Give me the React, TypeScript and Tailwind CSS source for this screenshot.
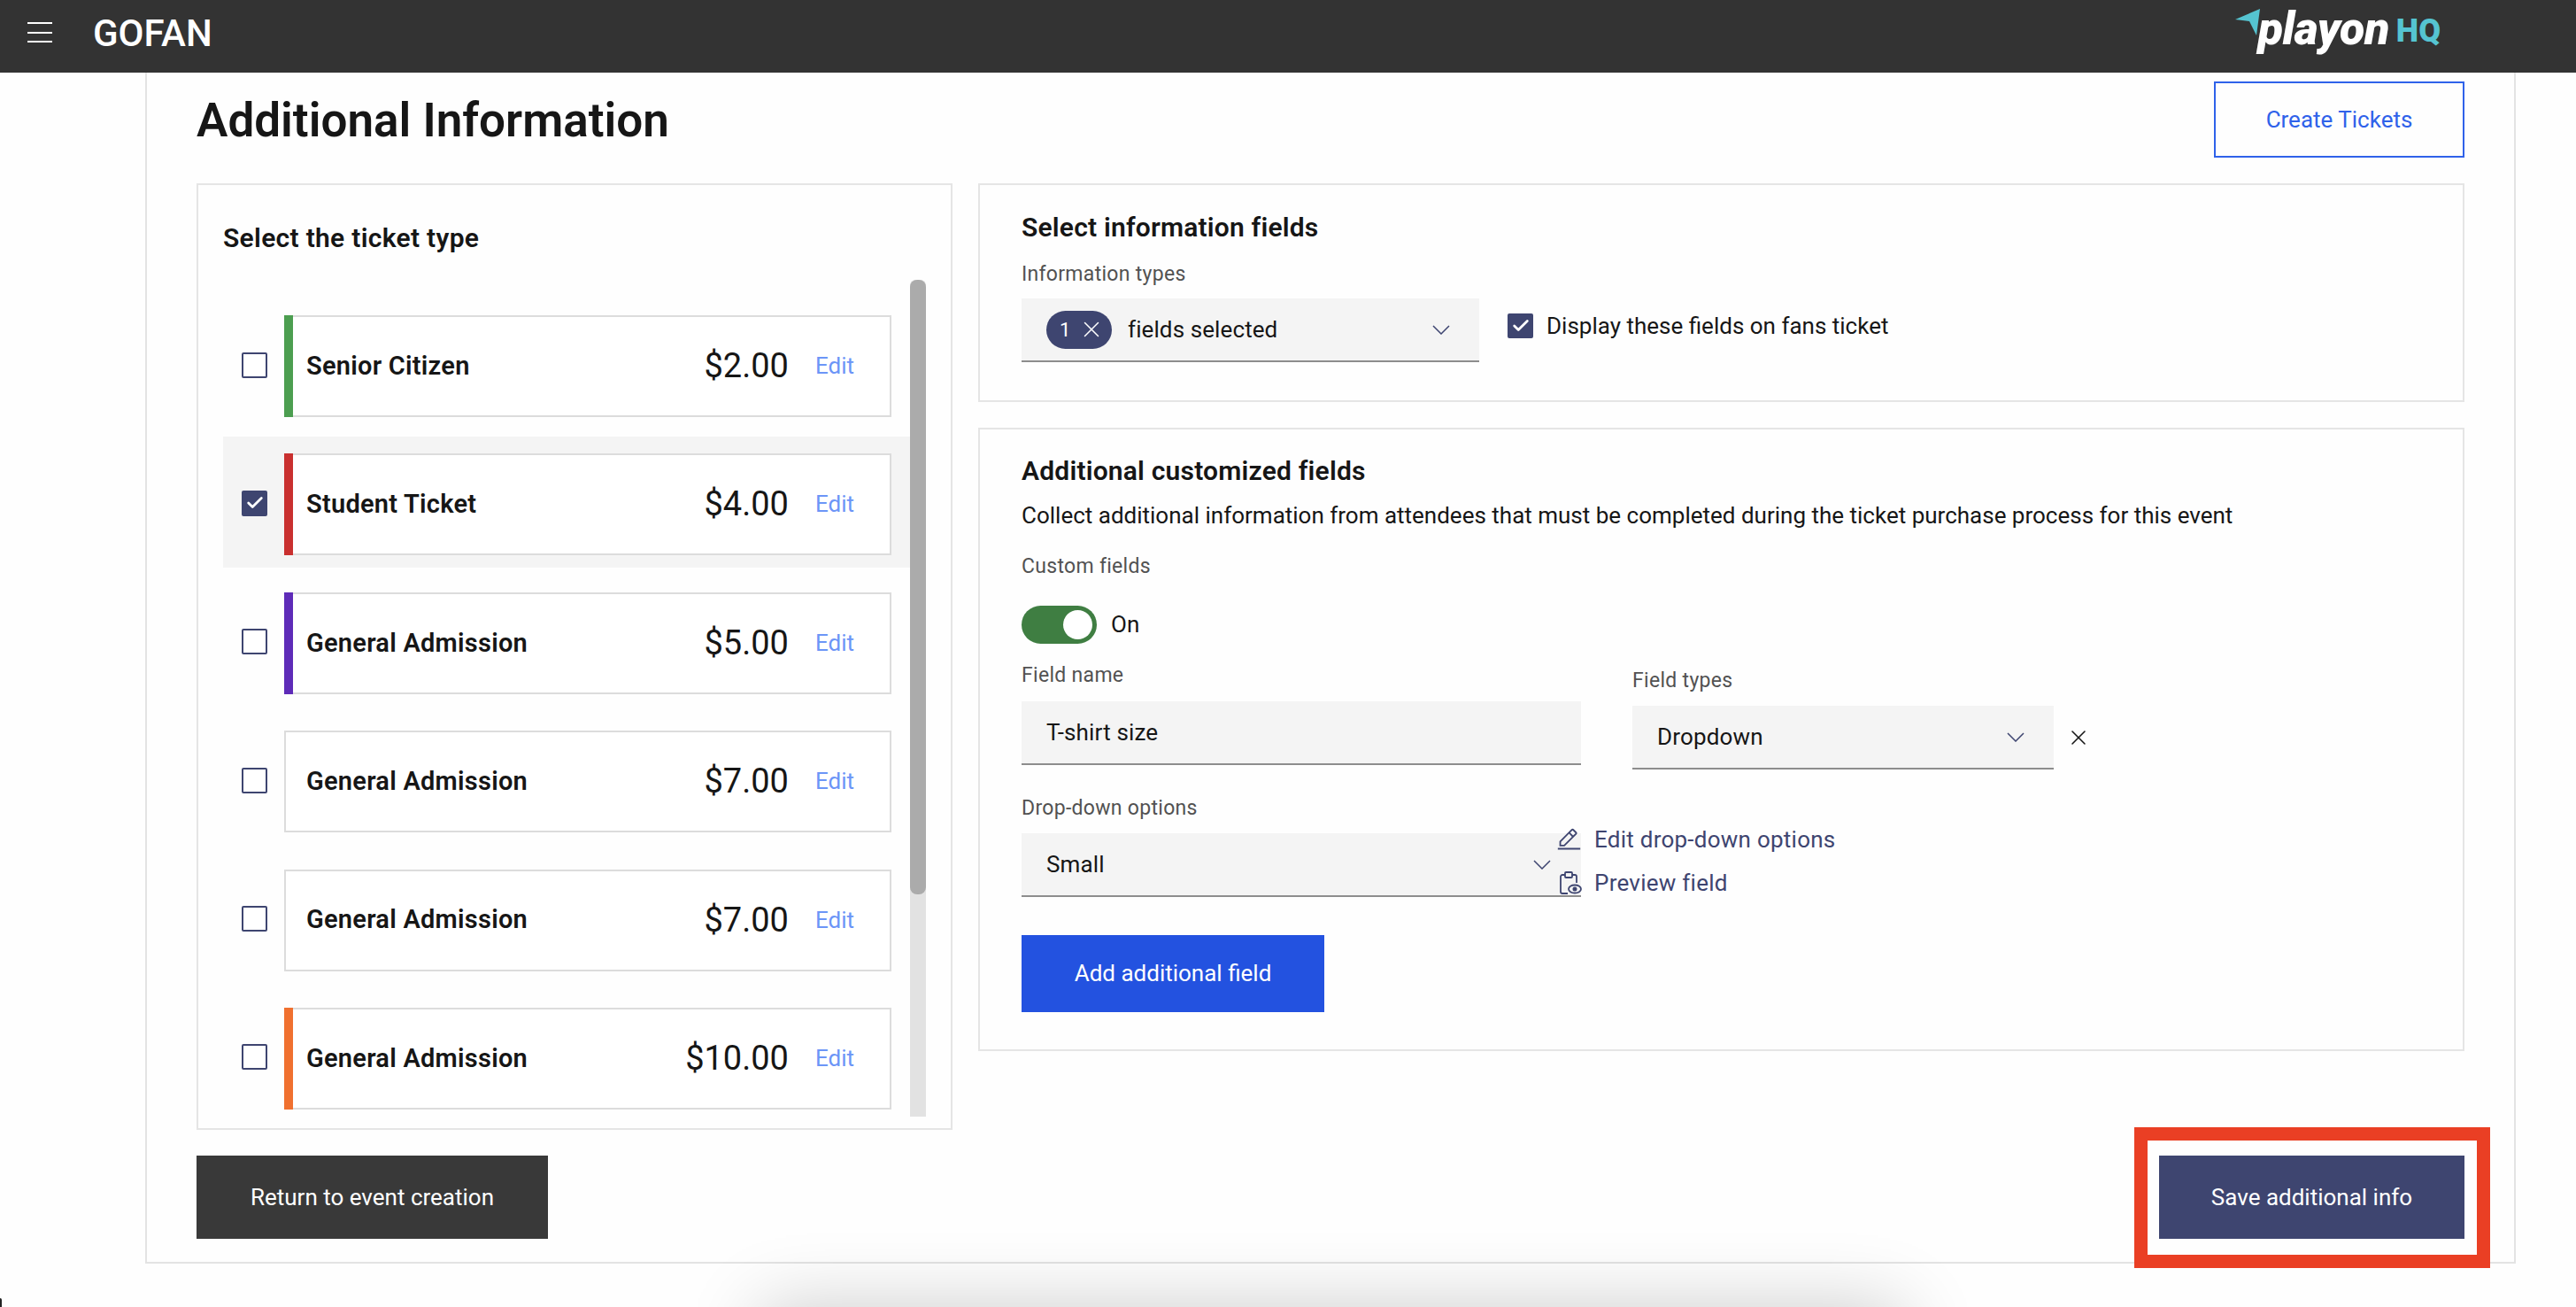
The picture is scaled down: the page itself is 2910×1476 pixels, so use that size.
import { Check, X } from 'lucide-react'

interface Ticket {
  id: number
  name: string
  price: string
  color?: string
  selected?: boolean
}

const tickets: Ticket[] = [
  { id: 1, name: 'Senior Citizen', price: '$2.00', color: 'bg-[#4c9e50]' },
  { id: 2, name: 'Student Ticket', price: '$4.00', color: 'bg-[#c9302f]', selected: true },
  { id: 3, name: 'General Admission', price: '$5.00', color: 'bg-[#5e2bb8]' },
  { id: 4, name: 'General Admission', price: '$7.00' },
  { id: 5, name: 'General Admission', price: '$7.00' },
  { id: 6, name: 'General Admission', price: '$10.00', color: 'bg-[#f0702f]' },
]

const Chevron = () => (
  <svg width="20" height="11" viewBox="0 0 20 11" fill="none" stroke="#3e4570" strokeWidth="1.5">
    <path d="M1 1l9 9 9-9" />
  </svg>
)

const App = () => {
  return (
    <div className="relative h-[1476px] overflow-hidden bg-[#fefefe] font-['Roboto',sans-serif] text-[#161616]">
      {/* Header */}
      <header className="flex h-[82px] items-start bg-[#333333] text-white">
        <div className="ml-[31px] mt-[25px] flex h-[23px] w-[28px] flex-col justify-between">
          <span className="h-[2px] bg-white"></span>
          <span className="h-[2px] bg-white"></span>
          <span className="h-[2px] bg-white"></span>
        </div>
        <span className="ml-[46px] mt-[14px] text-[42px] font-medium leading-[48px]">GOFAN</span>
        <div className="ml-auto mr-[153px] flex items-start">
          <svg className="mt-[10px]" width="28" height="30" viewBox="0 0 28 30" fill="#55c4d1">
            <path d="M0 12L28 0l-4 30-8-16z" />
          </svg>
          <span className="-ml-[2px] mt-[4px] text-[52px] font-black italic leading-[58px] tracking-[-0.5px]">playon</span>
          <span className="ml-[8px] mt-[15px] text-[36px] font-black leading-[40px] text-[#55c4d1]">HQ</span>
        </div>
      </header>

      {/* Main panel */}
      <main className="ml-[164px] mr-[68px] h-[1345px] border-x-2 border-b-2 border-[#e3e3e3] px-[56px] pt-[10px]">
        <div className="flex h-[86px] items-center justify-between">
          <h1 className="mt-[2px] text-[53px] font-semibold leading-[64px]">Additional Information</h1>
          <button className="h-[86px] w-[283px] border-2 border-[#2f62ea] text-[26px] text-[#2f62ea]">
            Create Tickets
          </button>
        </div>

        <div className="mt-[29px] flex gap-[29px]">
          {/* Ticket type card */}
          <section className="h-[1069px] w-[854px] border-2 border-[#e5e5e5] pl-[28px] pr-[28px]">
            <h2 className="mt-[42px] text-[30px] font-semibold leading-[36px] tracking-[0.3px]">Select the ticket type</h2>
            <div className="mt-[29px] flex h-[945px]">
              <div className="w-[776px] overflow-hidden pt-[21px]">
                {tickets.map((ticket) => (
                  <div
                    key={ticket.id}
                    className={`mb-[8.4px] flex h-[148px] items-center pb-[14px] pl-[21px] pr-[21px] pt-[19px] ${ticket.selected ? 'bg-[#f4f4f4]' : ''}`}
                  >
                    {ticket.selected ? (
                      <span className="mb-[3px] flex h-[29px] w-[29px] items-center justify-center rounded-[2px] bg-[#3e4570]">
                        <Check size={22} color="white" strokeWidth={3} />
                      </span>
                    ) : (
                      <span className="mb-[3px] h-[29px] w-[29px] rounded-[2px] border-2 border-[#3e4570] bg-white"></span>
                    )}
                    <div className="ml-[19px] flex h-[115px] flex-1 items-center border-2 border-[#dcdcdc] bg-white">
                      <span className={`-ml-[2px] h-[115px] w-[10px] ${ticket.color ?? ''}`}></span>
                      <span className="ml-[15px] flex-1 text-[29px] font-semibold tracking-[0.25px]">{ticket.name}</span>
                      <span className="text-[38px]">{ticket.price}</span>
                      <span className="ml-[30px] mr-[40px] text-[26px] text-[#6c95f7]">Edit</span>
                    </div>
                  </div>
                ))}
              </div>
              {/* Scrollbar */}
              <div className="h-[945px] w-[18px] rounded-t-[6px] bg-[#e2e2e2]">
                <div className="h-[694px] w-[18px] rounded-[8px] bg-[#ababab]"></div>
              </div>
            </div>
          </section>

          <div className="flex flex-1 flex-col gap-[29px]">
            {/* Select information fields */}
            <section className="h-[247px] border-2 border-[#e5e5e5] pl-[47px] pt-[30px]">
              <h2 className="text-[30px] font-semibold leading-[36px] tracking-[0.2px]">Select information fields</h2>
              <p className="mt-[20px] text-[23px] leading-[30px] tracking-[0.3px] text-[#525252]">Information types</p>
              <div className="mt-[12px] flex items-start">
                <div className="flex h-[72px] w-[517px] items-center border-b-2 border-[#8d8d8d] bg-[#f4f4f4] pl-[28px]">
                  <span className="flex h-[43px] w-[74px] items-center gap-[9px] rounded-full bg-[#3e4570] pl-[15px] text-[22px] text-white">
                    1 <X size={30} strokeWidth={1.2} />
                  </span>
                  <span className="ml-[18px] flex-1 text-[26px] tracking-[0.1px]">fields selected</span>
                  <span className="mr-[33px]">
                    <Chevron />
                  </span>
                </div>
                <span className="ml-[32px] mt-[17px] flex h-[28px] w-[29px] items-center justify-center rounded-[2px] bg-[#3e4570]">
                  <Check size={22} color="white" strokeWidth={3} />
                </span>
                <span className="ml-[15px] mt-[13px] text-[26px] leading-[36px]">Display these fields on fans ticket</span>
              </div>
            </section>

            {/* Additional customized fields */}
            <section className="h-[704px] border-2 border-[#e5e5e5] pl-[47px] pt-[29px]">
              <h2 className="text-[30px] font-semibold leading-[36px] tracking-[0.2px]">Additional customized fields</h2>
              <p className="mt-[14px] text-[26px] leading-[36px]">
                Collect additional information from attendees that must be completed during the ticket purchase process for this event
              </p>
              <p className="mt-[25px] text-[23px] leading-[30px] tracking-[0.3px] text-[#525252]">Custom fields</p>
              <div className="mt-[29px] flex items-center">
                <span className="flex h-[43px] w-[85px] items-center justify-end rounded-full bg-[#3f7e42] pr-[5px]">
                  <span className="h-[33px] w-[33px] rounded-full bg-white"></span>
                </span>
                <span className="ml-[16px] text-[26px]">On</span>
              </div>

              <div className="mt-[21px] flex items-start">
                <div className="w-[632px]">
                  <p className="text-[23px] leading-[30px] tracking-[0.3px] text-[#525252]">Field name</p>
                  <div className="mt-[14px] flex h-[72px] items-center border-b-2 border-[#8d8d8d] bg-[#f4f4f4] pl-[28px] text-[26px] tracking-[0.15px]">
                    T-shirt size
                  </div>
                </div>
                <div className="ml-[58px] mt-[6px] w-[476px]">
                  <p className="text-[23px] leading-[30px] tracking-[0.3px] text-[#525252]">Field types</p>
                  <div className="mt-[13px] flex h-[72px] items-center justify-between border-b-2 border-[#8d8d8d] bg-[#f4f4f4] pl-[28px] pr-[33px] text-[26px] tracking-[0.15px]">
                    Dropdown
                    <Chevron />
                  </div>
                </div>
                <X className="ml-[14px] mt-[71px]" size={28} strokeWidth={1.3} color="#161616" />
              </div>

              <p className="mt-[29px] text-[23px] leading-[30px] tracking-[0.3px] text-[#525252]">Drop-down options</p>
              <div className="mt-[13px] flex items-start">
                <div className="flex h-[72px] w-[632px] items-center justify-between border-b-2 border-[#8d8d8d] bg-[#f4f4f4] pl-[28px] pr-[34px] text-[26px] tracking-[0.15px]">
                  Small
                  <Chevron />
                </div>
                <div className="-ml-[28px] -mt-[8px] flex flex-col gap-[19px] text-[26px] leading-[30px] tracking-[0.25px] text-[#3e4570]">
                  <div className="flex items-center gap-[14px]">
                    <svg width="29" height="29" viewBox="0 0 32 32" fill="#3e4570">
                      <path d="M2 26h28v2H2zM25.4 9c.8-.8.8-2 0-2.8l-3.6-3.6c-.8-.8-2-.8-2.8 0l-15 15V24h6.4l15-15zm-5-5L24 7.6l-3 3L17.4 7l3-3zM6 22v-3.6l10-10l3.6 3.6l-10 10H6z" />
                    </svg>
                    Edit drop-down options
                  </div>
                  <div className="flex items-center gap-[14px]">
                    <svg width="29" height="26" viewBox="0 0 29 26" fill="none" stroke="#3e4570" strokeWidth="1.8">
                      <path d="M10 4H7a2 2 0 0 0-2 2v17a2 2 0 0 0 2 2h6" />
                      <path d="M18 4h3a2 2 0 0 1 2 2v7" />
                      <rect x="10" y="1" width="8" height="6" rx="1" />
                      <ellipse cx="21" cy="20" rx="7" ry="4.5" />
                      <circle cx="21" cy="20" r="1.6" fill="#3e4570" />
                    </svg>
                    Preview field
                  </div>
                </div>
              </div>

              <button className="mt-[43px] h-[87px] w-[342px] bg-[#2352e0] text-[26px] text-white">
                Add additional field
              </button>
            </section>
          </div>
        </div>

        <div className="mt-[29px] flex justify-between">
          <button className="h-[94px] w-[397px] bg-[#393939] text-[26px] text-white">Return to event creation</button>
          <button className="h-[94px] w-[345px] bg-[#3e4570] text-[26px] text-white">Save additional info</button>
        </div>
      </main>

      {/* Red annotation around the save button */}
      <div className="absolute left-[2411px] top-[1273px] h-[159px] w-[402px] border-[15px] border-[#ea3f24]"></div>

      {/* Window shadow at the bottom edge */}
      <div className="absolute left-[884px] top-[1500px] h-[200px] w-[1242px] shadow-[0_0_80px_24px_rgba(0,0,0,0.2)]"></div>
      <div className="absolute bottom-0 left-0 h-[10px] w-[2px] rounded-tr-full bg-[#222222]"></div>
    </div>
  )
}

export default App
